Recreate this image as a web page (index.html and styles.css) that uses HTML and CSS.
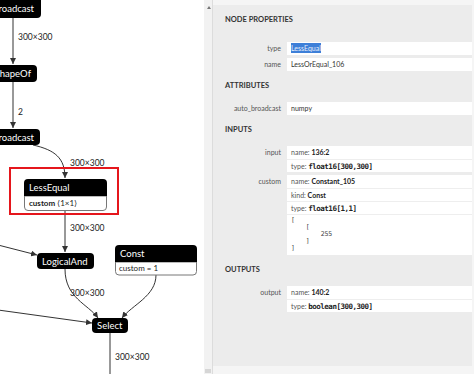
FILE: index.html
```html
<!DOCTYPE html>
<html lang="en">
<head>
  <meta charset="UTF-8" />
  <title>LessEqual - Node Properties</title>
  <link rel="stylesheet" href="styles.css">
</head>
<body>
  <div class="graph">
    <svg width="204" height="374" viewBox="0 0 204 374">
      <defs>
        <marker id="arrow" viewBox="0 0 8 8" refX="8" refY="4" markerWidth="6" markerHeight="6" orient="auto">
          <path d="M0,0 L8,4 L0,8 z" fill="#333" />
        </marker>
      </defs>

      <!-- edges -->
      <g class="edge">
        <path d="M13,18 L13,64" marker-end="url(#arrow)" />
        <path d="M13,82 L13,128" marker-end="url(#arrow)" />
        <path d="M33,145 C55,150 65,158 65,178" marker-end="url(#arrow)" />
        <path d="M65,210 L65,252" marker-end="url(#arrow)" />
        <path d="M-2,245 L37,255" marker-end="url(#arrow)" />
        <path d="M65,269 C65,298 88,304 98,318" marker-end="url(#arrow)" />
        <path d="M156,275 C156,296 132,305 122,318" marker-end="url(#arrow)" />
        <path d="M-2,310 L92,323" marker-end="url(#arrow)" />
        <path d="M110,333 L110,380" />
      </g>
      <g class="edge-label">
        <text x="18" y="40">300×300</text>
        <text x="18" y="115">2</text>
        <text x="70" y="166">300×300</text>
        <text x="70" y="231">300×300</text>
        <text x="70" y="296">300×300</text>
        <text x="115" y="360">300×300</text>
      </g>

      <!-- nodes (the first three run off the left edge of the view) -->
      <g class="node">
        <rect x="-20" y="-5" width="61" height="23" rx="4" />
        <text x="34" y="12" text-anchor="end">Broadcast</text>
      </g>
      <g class="node">
        <rect x="-20" y="65" width="57" height="17" rx="4" />
        <text x="31" y="77" text-anchor="end">ShapeOf</text>
      </g>
      <g class="node">
        <rect x="-20" y="129" width="60" height="16" rx="4" />
        <text x="34" y="141" text-anchor="end">Broadcast</text>
      </g>

      <rect class="highlight" x="10" y="168" width="108" height="46" />

      <g class="node">
        <path class="body" d="M24.5,196 L106.5,196 L106.5,207 Q106.5,210.5 103,210.5 L28,210.5 Q24.5,210.5 24.5,207 Z" />
        <path d="M24,196 L24,183 Q24,179 28,179 L103,179 Q107,179 107,183 L107,196 Z" />
        <text x="29" y="191">LessEqual</text>
        <text class="attr" x="29" y="206"><tspan class="attr-name">custom</tspan> ⟨1×1⟩</text>
      </g>
      <g class="node">
        <rect x="37" y="253" width="57" height="16" rx="4" />
        <text x="42" y="265">LogicalAnd</text>
      </g>
      <g class="node">
        <path class="body" d="M115.5,262 L196.5,262 L196.5,271.5 Q196.5,275 193,275 L119,275 Q115.5,275 115.5,271.5 Z" />
        <path d="M115,262 L115,249 Q115,245 119,245 L193,245 Q197,245 197,249 L197,262 Z" />
        <text x="120" y="257">Const</text>
        <text class="attr" x="119" y="271">custom = 1</text>
      </g>
      <g class="node">
        <rect x="92" y="318" width="36" height="15" rx="4" />
        <text x="97" y="329">Select</text>
      </g>
    </svg>
  </div>

  <div class="scrollbar"><span class="scroll-up"></span><span class="scroll-corner"></span></div>

  <div class="sidebar">
    <div class="panel">
      <div class="section-title first">NODE PROPERTIES</div>
      <div class="prop">
        <div class="label">type</div>
        <div class="value"><div class="line"><span class="selected">LessEqual</span></div></div>
      </div>
      <div class="prop">
        <div class="label">name</div>
        <div class="value"><div class="line">LessOrEqual_106</div></div>
      </div>

      <div class="section-title">ATTRIBUTES</div>
      <div class="prop">
        <div class="label">auto_broadcast</div>
        <div class="value"><div class="line">numpy</div></div>
      </div>

      <div class="section-title">INPUTS</div>
      <div class="prop">
        <div class="label">input</div>
        <div class="value">
          <div class="line"><span class="key">name:</span> <b>136:2</b></div>
          <div class="line"><span class="key">type:</span> <code>float16[300,300]</code></div>
        </div>
      </div>
      <div class="prop">
        <div class="label">custom</div>
        <div class="value">
          <div class="line"><span class="key">name:</span> <b>Constant_105</b></div>
          <div class="line"><span class="key">kind:</span> <b>Const</b></div>
          <div class="line"><span class="key">type:</span> <code>float16[1,1]</code></div>
          <pre class="tensor">[
    [
        255
    ]
]</pre>
        </div>
      </div>

      <div class="section-title">OUTPUTS</div>
      <div class="prop">
        <div class="label">output</div>
        <div class="value">
          <div class="line"><span class="key">name:</span> <b>140:2</b></div>
          <div class="line"><span class="key">type:</span> <code>boolean[300,300]</code></div>
        </div>
      </div>
    </div>
  </div>
</body>
</html>
```

FILE: styles.css
```css
* {
  box-sizing: border-box;
}

body {
  margin: 0;
  width: 474px;
  height: 374px;
  overflow: hidden;
  display: flex;
  font-family: Lato, "Open Sans", sans-serif;
  background: #fff;
}

/* graph canvas */
.graph {
  width: 204px;
  height: 374px;
  flex: none;
}

.graph svg {
  display: block;
}

.edge path {
  fill: none;
  stroke: #333;
  stroke-width: 1;
}

.edge-label text {
  font-size: 8.5px;
  fill: #222;
}

.node rect,
.node path {
  fill: #000;
}

.node path.body {
  fill: #fff;
  stroke: #777;
  stroke-width: 1;
}

.node text {
  font-size: 9.5px;
  fill: #fff;
}

.node text.attr {
  font-size: 8px;
  fill: #222;
}

.attr-name {
  font-weight: 700;
}

.highlight {
  fill: none;
  stroke: #e5161c;
  stroke-width: 2;
}

/* scrollbar strip */
.scrollbar {
  width: 9px;
  flex: none;
  background: #f2f2f2;
  border-right: 1px solid #dcdcdc;
  position: relative;
}

.scroll-up {
  position: absolute;
  top: 6px;
  left: 3px;
  border-left: 2px solid transparent;
  border-right: 2px solid transparent;
  border-bottom: 3px solid #777;
}

.scroll-corner {
  position: absolute;
  bottom: 1px;
  left: 1px;
  width: 6px;
  height: 4px;
  background: #d6d6d6;
}

/* sidebar */
.sidebar {
  flex: 1;
  background: #f5f5f5;
  padding: 5px 2px 8px 0;
}

.panel {
  height: 100%;
  background: #ececec;
  padding: 9px 0 0 0;
}

.section-title {
  font-size: 7.5px;
  font-weight: 700;
  color: #333;
  line-height: 12px;
  height: 12px;
  padding-left: 12px;
  margin: 9px 0 10px;
}

.section-title.first {
  margin: 0 0 16px;
}

.prop {
  display: flex;
  gap: 6px;
  margin-bottom: 3px;
}

.label {
  width: 68px;
  flex: none;
  text-align: right;
  font-size: 7px;
  color: #555;
  line-height: 13px;
}

.value {
  flex: 1;
  background: #fff;
  font-size: 7px;
  color: #333;
}

.line {
  height: 13px;
  line-height: 13px;
  padding-left: 4px;
  border-top: 1px solid #eee;
  white-space: nowrap;
}

.line:first-child {
  border-top: none;
}

.key {
  color: #555;
}

.value b {
  font-weight: 700;
  color: #222;
}

.value code {
  font-family: "DejaVu Sans Mono", monospace;
  font-size: 7.5px;
  letter-spacing: -0.5px;
  font-weight: 700;
  color: #222;
}

.selected {
  background: #3d7fd8;
  color: #e6eefa;
  padding: 1px 0;
}

.tensor {
  margin: 0;
  padding: 2px 4px 3px;
  border-top: 1px solid #eee;
  font-family: "DejaVu Sans Mono", monospace;
  font-size: 6.5px;
  letter-spacing: -0.2px;
  line-height: 7px;
  color: #444;
}
```
